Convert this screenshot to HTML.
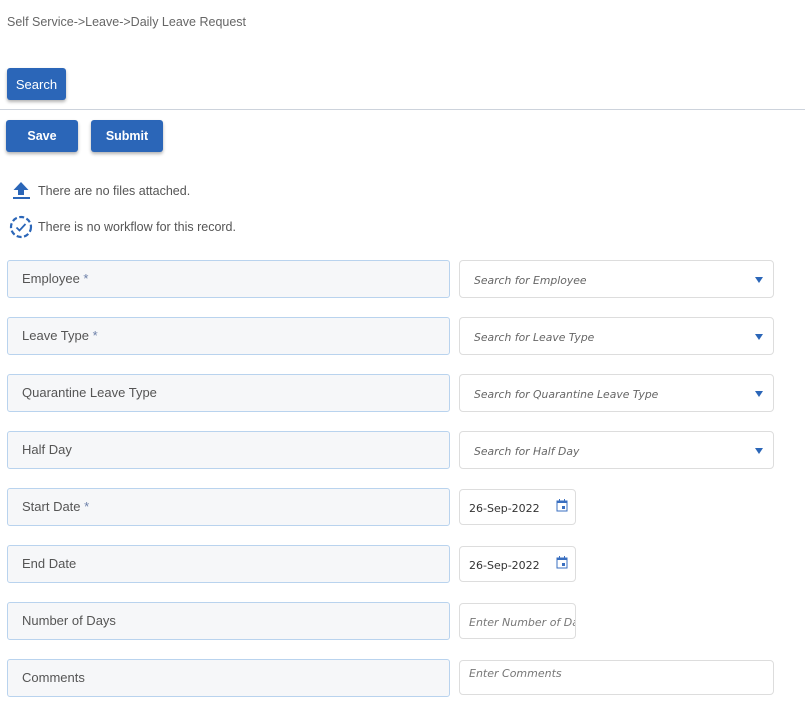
<!DOCTYPE html>
<html><head><style>
*{box-sizing:border-box;margin:0;padding:0}
body{width:805px;height:714px;background:#fff;font-family:"Liberation Sans",sans-serif;position:relative;overflow:hidden;color:#555}
.abs{position:absolute}
.btn{position:absolute;background:#2b66b8;color:#fff;border-radius:3px;box-shadow:0 2px 3px rgba(0,0,0,.3);font-size:13px;display:flex;align-items:center;justify-content:center}
.lab{position:absolute;left:7px;width:443px;height:38px;background:#f6f7f9;border:1px solid #b9d3ee;border-radius:3px;font-size:13px;color:#555;padding-left:14px;line-height:35px}
.lab span{color:#6b7fa8}
.sel{position:absolute;left:459px;width:315px;height:38px;border:1px solid #ddd;border-radius:4px;font-style:italic;color:#666;padding-left:14px;line-height:40px;font-family:"DejaVu Sans",sans-serif;font-size:10.8px}
.sel:after{content:"";position:absolute;right:10px;top:16px;border-left:4px solid transparent;border-right:4px solid transparent;border-top:6px solid #2b66b8}
.inp{position:absolute;left:459px;height:36px;border:1px solid #ddd;border-radius:4px;font-family:"DejaVu Sans",sans-serif;font-size:11px;color:#333;padding-left:9px;line-height:38px}
</style></head><body>
<div class="abs" style="left:7px;top:15px;font-size:12.5px;color:#666">Self Service-&gt;Leave-&gt;Daily Leave Request</div>
<div class="btn" style="left:7px;top:68px;width:59px;height:32px">Search</div>
<div class="abs" style="left:0;top:109px;width:805px;height:1px;background:#cdd3dc"></div>
<div class="btn" style="left:6px;top:120px;width:72px;height:32px;font-weight:bold;font-size:12.5px">Save</div>
<div class="btn" style="left:91px;top:120px;width:72px;height:32px;font-weight:bold;font-size:12.5px">Submit</div>
<svg class="abs" style="left:12px;top:180px" width="20" height="20" viewBox="0 0 20 20"><path d="M9 2 L1.5 10 H6 V15 H12 V10 H16.5 Z" fill="#2b66b8"/><rect x="1" y="17" width="17" height="2" fill="#2b66b8"/></svg>
<div class="abs" style="left:38px;top:184px;font-size:12.5px;color:#555">There are no files attached.</div>
<svg class="abs" style="left:9px;top:215px" width="24" height="24" viewBox="0 0 24 24"><circle cx="12" cy="12" r="10" fill="none" stroke="#2b66b8" stroke-width="2.2" stroke-dasharray="5 2.5"/><path d="M7.5 12.5 L10.5 15.5 L16.5 9" fill="none" stroke="#2b66b8" stroke-width="1.8"/></svg>
<div class="abs" style="left:38px;top:220px;font-size:12.5px;color:#555">There is no workflow for this record.</div>

<div class="lab" style="top:260px">Employee <span>*</span></div>
<div class="sel" style="top:260px">Search for Employee</div>
<div class="lab" style="top:317px">Leave Type <span>*</span></div>
<div class="sel" style="top:317px">Search for Leave Type</div>
<div class="lab" style="top:374px">Quarantine Leave Type</div>
<div class="sel" style="top:374px">Search for Quarantine Leave Type</div>
<div class="lab" style="top:431px">Half Day</div>
<div class="sel" style="top:431px">Search for Half Day</div>
<div class="lab" style="top:488px">Start Date <span>*</span></div>
<div class="inp" style="top:489px;width:117px">26-Sep-2022</div>
<div class="lab" style="top:545px">End Date</div>
<div class="inp" style="top:546px;width:117px">26-Sep-2022</div>
<svg class="abs" style="left:556px;top:499px" width="12" height="13" viewBox="0 0 12 13"><rect x="1" y="2" width="10" height="10" fill="none" stroke="#3a6fc0" stroke-width="1"/><rect x="1" y="2" width="10" height="2" fill="#3a6fc0"/><rect x="3" y="0" width="1" height="3" fill="#3a6fc0"/><rect x="8" y="0" width="1" height="3" fill="#3a6fc0"/><rect x="6" y="7" width="3" height="3" fill="#3a6fc0"/></svg>
<svg class="abs" style="left:556px;top:556px" width="12" height="13" viewBox="0 0 12 13"><rect x="1" y="2" width="10" height="10" fill="none" stroke="#3a6fc0" stroke-width="1"/><rect x="1" y="2" width="10" height="2" fill="#3a6fc0"/><rect x="3" y="0" width="1" height="3" fill="#3a6fc0"/><rect x="8" y="0" width="1" height="3" fill="#3a6fc0"/><rect x="6" y="7" width="3" height="3" fill="#3a6fc0"/></svg>
<div class="lab" style="top:602px">Number of Days</div>
<div class="inp" style="top:603px;width:117px;font-style:italic;color:#777;overflow:hidden;white-space:nowrap">Enter Number of Days</div>
<div class="lab" style="top:659px">Comments</div>
<div class="inp" style="top:660px;width:315px;height:35px;font-style:italic;color:#777;line-height:26px">Enter Comments</div>
</body></html>
